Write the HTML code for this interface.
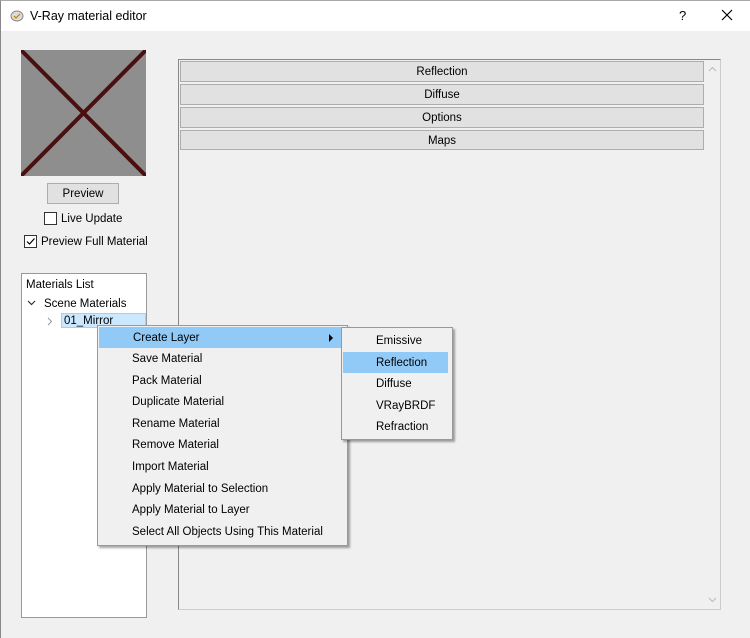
<!DOCTYPE html>
<html><head><style>
*{margin:0;padding:0;box-sizing:border-box}
body{width:750px;height:638px;background:#f0f0f0;font-family:"Liberation Sans",sans-serif;font-size:11.5px;color:#000;position:relative;overflow:hidden}
.a{position:absolute}
.title{left:0;top:0;width:750px;height:31px;background:#fff;border-left:1px solid #888;border-top:1px solid #aaa}
.btn{background:#e1e1e1;border:1px solid #adadad;text-align:center;line-height:20px}
.cb{width:13px;height:13px;border:1px solid #333;background:#fff}
.mi{position:absolute;left:0;right:0;height:21px;line-height:23px;padding-left:34px}
.si{position:absolute;left:0;right:0;height:21px;line-height:23px;padding-left:34px}
</style></head><body>
<div class="a title"></div>
<div class="a" style="left:0;top:31px;width:1px;height:607px;background:#888"></div>
<svg class="a" style="left:10px;top:9px" width="14" height="14" viewBox="0 0 14 14"><ellipse cx="7" cy="7" rx="6" ry="5" fill="#ddd" stroke="#888"/><path d="M4 7l2 2 4-4" stroke="#c80" fill="none" stroke-width="1.3"/></svg>
<div class="a" style="left:30px;top:9px;font-size:12.5px">V-Ray material editor</div>
<div class="a" style="left:679px;top:8px;font-size:13px">?</div>
<svg class="a" style="left:721px;top:9px" width="12" height="12"><path d="M1 1L11 11M11 1L1 11" stroke="#000" stroke-width="1.2"/></svg>

<svg class="a" style="left:21px;top:50px" width="125" height="126"><rect width="125" height="126" fill="#8e8e8e"/><path d="M0 0L125 126M125 0L0 126" stroke="#4a0f0f" stroke-width="4"/></svg>
<div class="a btn" style="left:47px;top:183px;width:72px;height:21px;line-height:21px">Preview</div>
<div class="a cb" style="left:44px;top:212px"></div>
<div class="a" style="left:61px;top:213px">Live Update</div>
<div class="a cb" style="left:24px;top:235px"></div>
<svg class="a" style="left:24px;top:235px" width="13" height="13"><path d="M3 6.5l2.5 2.5 5-5.5" stroke="#000" fill="none" stroke-width="1.2"/></svg>
<div class="a" style="left:41px;top:236px">Preview Full Material</div>

<div class="a" style="left:21px;top:273px;width:126px;height:345px;background:#fff;border:1px solid #999"></div>
<div class="a" style="left:26px;top:279px">Materials List</div>
<svg class="a" style="left:27px;top:299px" width="9" height="8"><path d="M1 2l3.5 3.5L8 2" stroke="#333" fill="none" stroke-width="1.2"/></svg>
<div class="a" style="left:44px;top:298px">Scene Materials</div>
<svg class="a" style="left:47px;top:317px" width="6" height="9"><path d="M1 1l3.5 3.5L1 8" stroke="#999" fill="none"/></svg>
<div class="a" style="left:61px;top:313px;width:85px;height:15px;background:#cce8ff;border:1px solid #99d1ff"></div>
<div class="a" style="left:64px;top:315px">01_Mirror</div>

<div class="a" style="left:178px;top:59px;width:543px;height:551px;border:1px solid #888;border-right-color:#ccc;border-bottom-color:#ccc;background:#f0f0f0"></div>
<div class="a btn" style="left:180px;top:61px;width:524px;height:21px">Reflection</div>
<div class="a btn" style="left:180px;top:84px;width:524px;height:21px">Diffuse</div>
<div class="a btn" style="left:180px;top:107px;width:524px;height:21px">Options</div>
<div class="a btn" style="left:180px;top:130px;width:524px;height:20px">Maps</div>
<svg class="a" style="left:708px;top:66px" width="9" height="6"><path d="M1 5l3.5-3.5L8 5" stroke="#bbb" fill="none"/></svg>
<svg class="a" style="left:708px;top:597px" width="9" height="6"><path d="M1 1l3.5 3.5L8 1" stroke="#bbb" fill="none"/></svg>

<div class="a" style="left:97px;top:325px;width:251px;height:221px;background:#f0f0f0;border:1px solid #999;box-shadow:2px 2px 2px rgba(0,0,0,.35)">
<div class="mi" style="top:1px;left:1px;right:1px;background:#91c9f7">Create Layer</div>
<svg class="a" style="left:231px;top:8px" width="5" height="8"><path d="M0 0L4 4L0 8Z" fill="#000"/></svg>
<div class="mi" style="top:22px">Save Material</div>
<div class="mi" style="top:44px">Pack Material</div>
<div class="mi" style="top:65px">Duplicate Material</div>
<div class="mi" style="top:87px">Rename Material</div>
<div class="mi" style="top:108px">Remove Material</div>
<div class="mi" style="top:130px">Import Material</div>
<div class="mi" style="top:152px">Apply Material to Selection</div>
<div class="mi" style="top:173px">Apply Material to Layer</div>
<div class="mi" style="top:195px">Select All Objects Using This Material</div>
</div>
<div class="a" style="left:341px;top:327px;width:112px;height:113px;background:#f0f0f0;border:1px solid #999;box-shadow:2px 2px 2px rgba(0,0,0,.35)">
<div class="si" style="top:2px">Emissive</div>
<div class="si" style="top:24px;left:1px;right:4px;padding-left:33px;background:#91c9f7">Reflection</div>
<div class="si" style="top:45px">Diffuse</div>
<div class="si" style="top:67px">VRayBRDF</div>
<div class="si" style="top:88px">Refraction</div>
</div>
</body></html>
